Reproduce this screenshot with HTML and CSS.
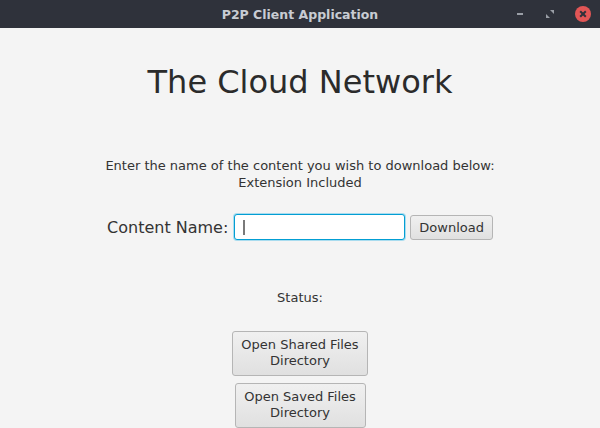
FILE: index.html
```html
<!DOCTYPE html>
<html lang="en">

<head>
    <meta charset="UTF-8">
    <meta name="viewport" content="width=device-width, initial-scale=1.0">
    <title>P2P Client Application</title>
    <link rel="stylesheet" href="styles.css">
</head>

<body>
    <div class="window">
        <div class="titlebar">
            <div class="titlebar__title">P2P Client Application</div>
            <div class="titlebar__controls">
                <span class="ctrl ctrl--min"></span>
                <span class="ctrl ctrl--max">
                    <svg width="10" height="10" viewBox="0 0 10 10">
                        <path d="M5 1h4v4z M1 5v4h4z" fill="#9a9ea6" />
                    </svg>
                </span>
                <span class="ctrl ctrl--close">
                    <svg width="16" height="16" viewBox="0 0 16 16">
                        <circle cx="8" cy="8" r="8" fill="#e25656" />
                        <path d="M5.2 5.2l5.6 5.6M10.8 5.2l-5.6 5.6" stroke="#2e313a" stroke-width="2" />
                    </svg>
                </span>
            </div>
        </div>
        <div class="content">
            <div class="h1">The Cloud Network</div>
            <div class="hint">Enter the name of the content you wish to download below:<br>Extension Included</div>
            <div class="search-row">
                <label class="search-label">Content Name:</label>
                <div class="text-field"><span class="caret"></span></div>
                <button class="btn">Download</button>
            </div>
            <div class="status">Status:</div>
            <button class="btn btn--big btn--shared">Open Shared Files<br>Directory</button>
            <button class="btn btn--big btn--saved">Open Saved Files<br>Directory</button>
        </div>
    </div>
</body>

</html>
```

FILE: styles.css
```css
* {
    box-sizing: border-box;
    margin: 0;
    padding: 0;
}

body {
    width: 600px;
    height: 428px;
    overflow: hidden;
    background: #f4f4f4;
    font-family: "DejaVu Sans", sans-serif;
    color: #333333;
}

.titlebar {
    height: 28px;
    background: #2f323b;
    position: relative;
    display: flex;
    align-items: center;
    justify-content: center;
}

.titlebar__title {
    color: #c8ccd3;
    font-weight: bold;
    font-size: 12.5px;
}

.titlebar__controls {
    position: absolute;
    right: 9px;
    top: 6px;
    display: flex;
    align-items: center;
}

.ctrl {
    display: flex;
    align-items: center;
    justify-content: center;
    height: 16px;
}

.ctrl--min {
    width: 6px;
    height: 2px;
    background: #9a9ea6;
    margin-right: 22px;
}

.ctrl--max {
    width: 10px;
    margin-right: 20px;
}

.content {
    display: flex;
    flex-direction: column;
    align-items: center;
}

.h1 {
    font-size: 32px;
    margin-top: 35px;
    line-height: 38px;
    color: #2b2b2b;
}

.hint {
    margin-top: 56px;
    font-size: 13px;
    line-height: 17px;
    text-align: center;
}

.search-row {
    display: flex;
    align-items: center;
    margin-top: 23px;
}

.search-label {
    font-size: 16px;
    margin-right: 6px;
}

.text-field {
    width: 171px;
    height: 26px;
    background: #ffffff;
    border: 1px solid #039ed3;
    border-radius: 3px;
    box-shadow: 0 0 0 1px #a9dcef;
    display: flex;
    align-items: center;
    padding-left: 8px;
    margin-right: 5px;
}

.caret {
    width: 2px;
    height: 15px;
    background: #7a7a7a;
}

.btn {
    font-family: "DejaVu Sans", sans-serif;
    font-size: 13px;
    color: #333333;
    background: linear-gradient(#f0f0f0, #e0e0e0);
    border: 1px solid #b5b5b5;
    border-radius: 3px;
    height: 25px;
    padding: 0 8px;
    line-height: 17px;
}

.status {
    margin-top: 50px;
    font-size: 13px;
}

.btn--big {
    height: 45px;
    line-height: 16px;
    padding-bottom: 2px;
    text-align: center;
}

.btn--shared {
    width: 136px;
    margin-top: 26px;
}

.btn--saved {
    width: 131px;
    margin-top: 7px;
}
```
